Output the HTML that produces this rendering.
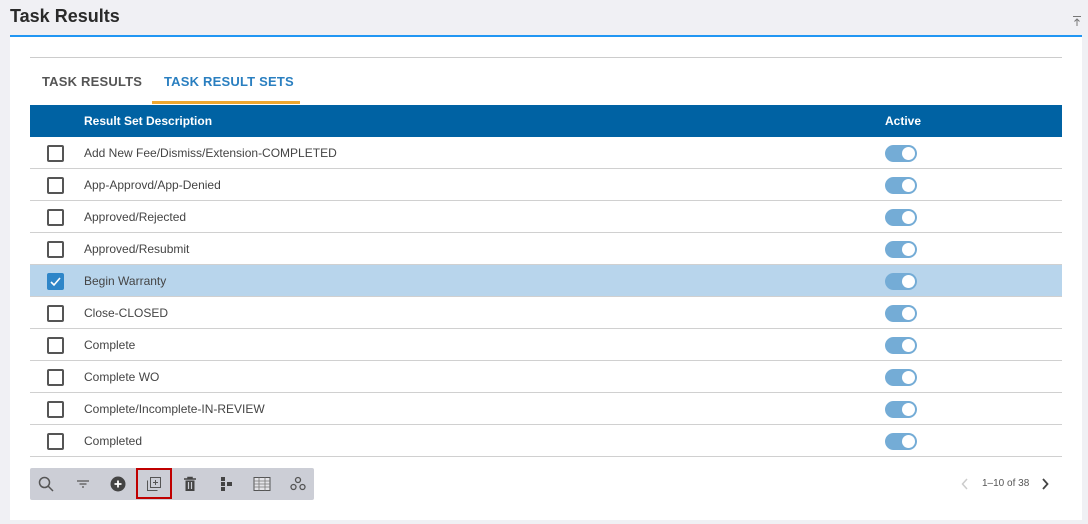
<!DOCTYPE html>
<html><head><style>
*{margin:0;padding:0;box-sizing:border-box}
body{width:1088px;height:524px;background:#f0f0f4;font-family:"Liberation Sans",sans-serif;position:relative;overflow:hidden;color:#333}
.title{position:absolute;left:10px;top:6px;font-size:18px;font-weight:bold;color:#2a2a2a}
.panel{position:absolute;left:10px;top:35px;width:1072px;height:485px;background:#fff;border-top:2px solid #2196f3}
.hr{position:absolute;left:30px;top:57px;width:1032px;height:1px;background:#ccc}
.tab{position:absolute;top:74px;font-size:13px;font-weight:bold;letter-spacing:.2px}
.ul{position:absolute;left:152px;top:101px;width:148px;height:3px;background:#f0a830}
.head{position:absolute;left:30px;top:105px;width:1032px;height:32px;background:#0062a3;color:#fff;font-size:12px;font-weight:bold}
.head span{position:absolute;top:9px}
.row{position:absolute;left:30px;width:1032px;height:32px;border-bottom:1px solid #d0d0d0;font-size:12px;color:#444}
.row.sel{background:#b8d5ec}
.cb{position:absolute;left:17px;top:8px;width:17px;height:17px;border:2px solid #555;border-radius:2px;background:#fff}
.sel .cb{background:#2f86c8;border-color:#2f86c8}
.row .t{position:absolute;left:54px;top:9px}
.tg{position:absolute;left:855px;top:8px;width:32px;height:17px;border-radius:9px;background:#74acd6}
.tg:after{content:"";position:absolute;right:2px;top:2px;width:13px;height:13px;border-radius:50%;background:#fff}
.tb{position:absolute;left:30px;top:468px;width:284px;height:32px;background:#ccced6;border-radius:2px}
.tb svg{position:absolute;top:8px}
.red{position:absolute;left:136px;top:468px;width:36px;height:31px;border:2px solid #c00000}
.pg{position:absolute;left:982px;top:478px;font-size:10px;color:#555}
</style></head><body>
<div class="title">Task Results</div>
<svg style="position:absolute;left:1072px;top:15px" width="10" height="12" viewBox="0 0 10 12"><path d="M1 1.5h8M5 4v7M2.5 6.5L5 4l2.5 2.5" stroke="#777" fill="none"/></svg>
<div class="panel"></div>
<div class="hr"></div>
<div class="tab" style="left:42px;color:#555">TASK RESULTS</div>
<div class="tab" style="left:164px;color:#2a7fc0">TASK RESULT SETS</div>
<div class="ul"></div>
<div class="head"><span style="left:54px">Result Set Description</span><span style="left:855px">Active</span></div>
<div class="row" style="top:137px"><div class="cb"></div><div class="t">Add New Fee/Dismiss/Extension-COMPLETED</div><div class="tg"></div></div>
<div class="row" style="top:169px"><div class="cb"></div><div class="t">App-Approvd/App-Denied</div><div class="tg"></div></div>
<div class="row" style="top:201px"><div class="cb"></div><div class="t">Approved/Rejected</div><div class="tg"></div></div>
<div class="row" style="top:233px"><div class="cb"></div><div class="t">Approved/Resubmit</div><div class="tg"></div></div>
<div class="row sel" style="top:265px"><div class="cb"><svg width="13" height="13" viewBox="0 0 13 13" style="position:absolute;left:0;top:0"><path d="M2 7l3 3 6-7" stroke="#fff" stroke-width="1.6" fill="none"/></svg></div><div class="t">Begin Warranty</div><div class="tg"></div></div>
<div class="row" style="top:297px"><div class="cb"></div><div class="t">Close-CLOSED</div><div class="tg"></div></div>
<div class="row" style="top:329px"><div class="cb"></div><div class="t">Complete</div><div class="tg"></div></div>
<div class="row" style="top:361px"><div class="cb"></div><div class="t">Complete WO</div><div class="tg"></div></div>
<div class="row" style="top:393px"><div class="cb"></div><div class="t">Complete/Incomplete-IN-REVIEW</div><div class="tg"></div></div>
<div class="row" style="top:425px"><div class="cb"></div><div class="t">Completed</div><div class="tg"></div></div>
<div class="tb">
<svg style="left:8px" width="16" height="16" viewBox="0 0 16 16"><circle cx="6.5" cy="6.5" r="5" stroke="#555" stroke-width="1.5" fill="none"/><path d="M10 10l5 5" stroke="#555" stroke-width="1.5"/></svg>
<svg style="left:45px" width="16" height="16" viewBox="0 0 16 16"><path d="M2 5h12M4.5 8h7M7 11h2" stroke="#555" stroke-width="1.3"/></svg>
<svg style="left:80px" width="16" height="16" viewBox="0 0 16 16"><circle cx="8" cy="8" r="7.5" fill="#444"/><path d="M8 4.5v7M4.5 8h7" stroke="#fff" stroke-width="1.8"/></svg>
<svg style="left:116px" width="16" height="16" viewBox="0 0 16 16"><rect x="4.5" y="1.5" width="10" height="10" stroke="#555" fill="none"/><path d="M1.5 4.5v10h10" stroke="#555" fill="none"/><path d="M9.5 4v5M7 6.5h5" stroke="#555"/></svg>
<svg style="left:152px" width="16" height="16" viewBox="0 0 16 16"><path d="M2 3h12M6 3V1.5h4V3" stroke="#444" stroke-width="1.5" fill="none"/><rect x="3.5" y="4.5" width="9" height="10.5" fill="#444"/><path d="M6.5 6v7M9.5 6v7" stroke="#ccced6" stroke-width="1.2"/></svg>
<svg style="left:188px" width="16" height="16" viewBox="0 0 16 16"><rect x="3" y="1" width="4" height="4" fill="#444"/><rect x="3" y="6" width="4" height="4" fill="#444"/><rect x="3" y="11" width="4" height="4" fill="#444"/><rect x="9" y="6" width="5" height="4" fill="#444"/></svg>
<svg style="left:223px" width="18" height="16" viewBox="0 0 18 16"><rect x="1" y="1.5" width="16" height="13" stroke="#555" fill="#e4e4e8"/><path d="M1 5h16M1 8h16M1 11h16M6 1.5v13M12 1.5v13" stroke="#777" stroke-width=".8"/></svg>
<svg style="left:259px" width="18" height="16" viewBox="0 0 18 16"><circle cx="9" cy="4" r="2.5" stroke="#555" fill="none" stroke-width="1.3"/><circle cx="4.5" cy="11" r="2.5" stroke="#555" fill="none" stroke-width="1.3"/><circle cx="13.5" cy="11" r="2.5" stroke="#555" fill="none" stroke-width="1.3"/></svg>
</div>
<div class="red"></div>
<svg style="position:absolute;left:961px;top:478px" width="8" height="12" viewBox="0 0 8 12"><path d="M6 1L1.5 6 6 11" stroke="#ccc" stroke-width="1.5" fill="none"/></svg>
<div class="pg">1–10 of 38</div>
<svg style="position:absolute;left:1041px;top:478px" width="8" height="12" viewBox="0 0 8 12"><path d="M2 1l4.5 5L2 11" stroke="#444" stroke-width="1.8" fill="none"/></svg>
</body></html>
